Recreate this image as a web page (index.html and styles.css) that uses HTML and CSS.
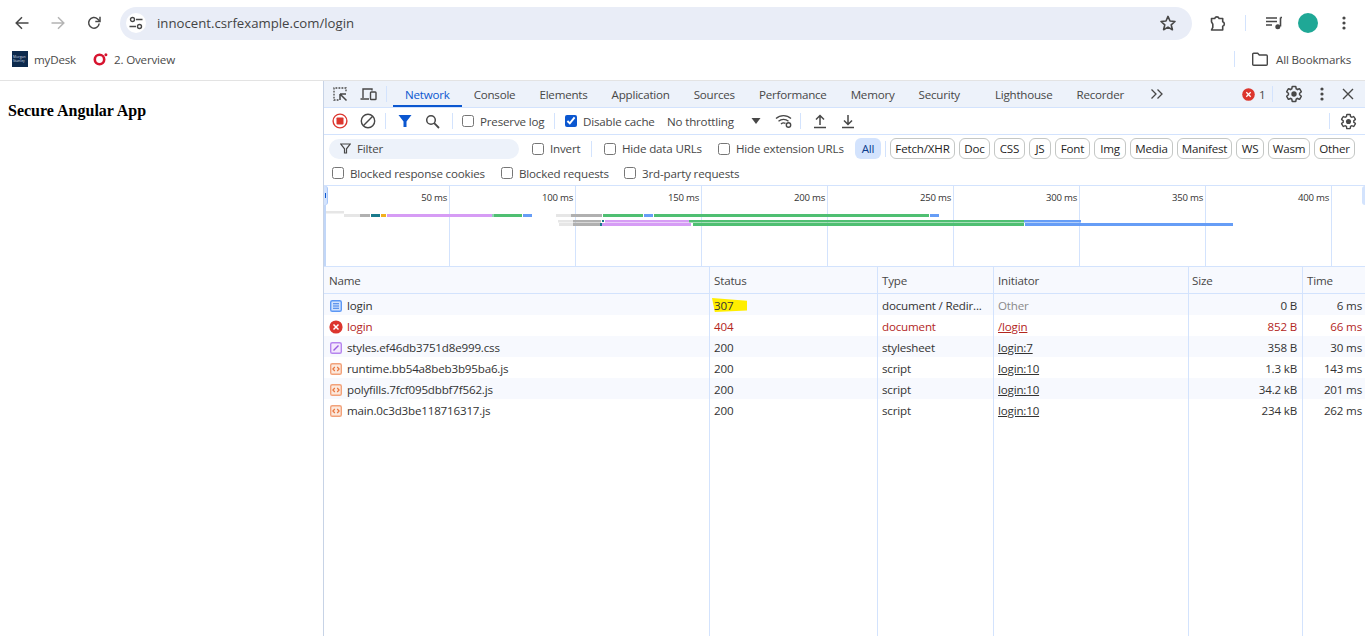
FILE: index.html
```html
<!DOCTYPE html>
<html lang="en">
<head>
<meta charset="utf-8">
<title>Secure Angular App</title>
<link rel="stylesheet" href="styles.css">
</head>
<body>
<svg class="defs" width="0" height="0" aria-hidden="true">
  <symbol id="gear" viewBox="0 0 24 24">
    <path fill="none" stroke="currentColor" stroke-width="2" d="M19.43 12.98c.04-.32.07-.64.07-.98s-.03-.66-.07-.98l2.11-1.65c.19-.15.24-.42.12-.64l-2-3.46c-.12-.22-.39-.3-.61-.22l-2.49 1c-.52-.4-1.08-.73-1.69-.98l-.38-2.65C14.46 2.18 14.25 2 14 2h-4c-.25 0-.46.18-.49.42l-.38 2.65c-.61.25-1.17.59-1.69.98l-2.49-1c-.23-.09-.49 0-.61.22l-2 3.46c-.13.22-.07.49.12.64l2.11 1.65c-.04.32-.07.65-.07.98s.03.66.07.98l-2.11 1.65c-.19.15-.24.42-.12.64l2 3.46c.12.22.39.3.61.22l2.49-1c.52.4 1.08.73 1.69.98l.38 2.65c.03.24.24.42.49.42h4c.25 0 .46-.18.49-.42l.38-2.65c.61-.25 1.17-.59 1.69-.98l2.49 1c.23.09.49 0 .61-.22l2-3.46c.12-.22.07-.49-.12-.64l-2.11-1.65z"/>
    <circle cx="12" cy="12" r="3.6" fill="currentColor"/>
  </symbol>
  <symbol id="dots" viewBox="0 0 16 16">
    <circle cx="8" cy="3" r="1.6" fill="currentColor"/><circle cx="8" cy="8" r="1.6" fill="currentColor"/><circle cx="8" cy="13" r="1.6" fill="currentColor"/>
  </symbol>
  <symbol id="jsfile" viewBox="0 0 14 14">
    <rect x="1.7" y="1.7" width="10.6" height="10.6" rx="1.6" fill="#fce8dc" stroke="#f2a27a" stroke-width="1.4"/>
    <path d="M5.8 5 3.9 7l1.9 2M8.2 5l1.9 2-1.9 2" fill="none" stroke="#e8763f" stroke-width="1.2"/>
  </symbol>
</svg>

<header class="toolbar">
  <svg class="nav-icon" viewBox="0 0 16 16"><path d="M14.5 8H2.5M8 2.2 2.2 8 8 13.8" fill="none" stroke="#474747" stroke-width="1.5"/></svg>
  <svg class="nav-icon" viewBox="0 0 16 16"><path d="M1.5 8h12M8 2.2 13.8 8 8 13.8" fill="none" stroke="#b4b4b4" stroke-width="1.5"/></svg>
  <svg class="nav-icon" viewBox="0 0 16 16"><path d="M13.2 8.5A5.3 5.3 0 1 1 11.6 4L13.6 6" fill="none" stroke="#474747" stroke-width="1.5"/><path d="M14 1.8V6.5H9.3" fill="none" stroke="#474747" stroke-width="1.5"/></svg>
  <div class="omnibox">
    <span class="tune">
      <svg width="14" height="14" viewBox="0 0 14 14"><circle cx="3.5" cy="3.5" r="2" fill="none" stroke="#474747" stroke-width="1.4"/><path d="M7 3.5h6.5M.5 10.5H7" stroke="#474747" stroke-width="1.4"/><circle cx="10.5" cy="10.5" r="2" fill="none" stroke="#474747" stroke-width="1.4"/></svg>
    </span>
    <span class="url">innocent.csrfexample.com/login</span>
    <svg class="star" width="18" height="18" viewBox="0 0 18 18"><path d="M9 2.4 11 7l5 .5-3.8 3.3 1.2 4.9L9 13.1l-4.4 2.6 1.2-4.9L2 7.5 7 7z" fill="none" stroke="#474747" stroke-width="1.6" stroke-linejoin="round"/></svg>
  </div>
  <svg class="ext" width="18" height="18" viewBox="0 0 18 18"><path d="M2.500 4.500h3.200a2.300 2.300 0 0 1 4.400 0h3.600v3.300a2.300 2.300 0 0 1 0 4.400v3.800H2.500l1.300-2.600v-3.200l-1.300-2.400z" fill="none" stroke="#474747" stroke-width="1.600" stroke-linejoin="round"/></svg>
  <span class="tool-sep"></span>
  <svg class="media" width="18" height="16" viewBox="0 0 18 16"><path d="M1 3h11M1 6.500h11M1 10h6" stroke="#474747" stroke-width="1.500"/><path d="M15.500 2.500v9" stroke="#474747" stroke-width="1.600"/><path d="M15.500 2.500H17" stroke="#474747" stroke-width="1.600"/><circle cx="12.800" cy="11.800" r="2.500" fill="#474747"/></svg>
  <span class="avatar"></span>
  <svg class="chrome-dots" width="16" height="16"><use href="#dots"/></svg>
</header>

<nav class="bookmarks">
  <span class="ms-logo">Morgan<br>Stanley</span>
  <span class="bm-label">myDesk</span>
  <svg class="o-logo" width="15" height="14" viewBox="0 0 15 14"><circle cx="6.500" cy="7.500" r="4.700" fill="none" stroke="#d7142f" stroke-width="2.600"/><circle cx="12.900" cy="2.700" r="1.500" fill="#d7142f"/></svg>
  <span class="bm-label">2. Overview</span>
  <span class="bm-spacer"></span>
  <span class="bm-sep"></span>
  <svg class="folder" width="18" height="16" viewBox="0 0 18 16"><path d="M1.700 3.200c0-.6.400-1 1-1h4l1.600 1.800h7c.6 0 1 .4 1 1v8.300c0 .6-.4 1-1 1H2.700c-.6 0-1-.4-1-1z" fill="none" stroke="#474747" stroke-width="1.400"/></svg>
  <span class="bm-label">All Bookmarks</span>
</nav>

<main class="split">
  <section class="page"><strong class="app-title">Secure Angular App</strong></section>

  <section class="devtools">
    <div class="tabbar">
      <svg class="dt-i first" width="16" height="16" viewBox="0 0 16 16"><path d="M6.500 14H2V2h12v4.500" fill="none" stroke="#474747" stroke-width="1.300" stroke-dasharray="1.800 1.200"/><path d="M8 8h6M8 8v6M8 8l6.500 6.500" fill="none" stroke="#474747" stroke-width="1.500"/></svg>
      <svg class="dt-i dev" width="17" height="16" viewBox="0 0 17 16"><path d="M3 12V3h9v1.500M.5 13h8.500" fill="none" stroke="#474747" stroke-width="1.400"/><rect x="10.500" y="6" width="5.500" height="7.500" rx=".8" fill="none" stroke="#474747" stroke-width="1.400"/></svg>
      <span class="vsep tab-sep"></span>
      <span class="tab active">Network</span>
      <span class="tab">Console</span>
      <span class="tab">Elements</span>
      <span class="tab">Application</span>
      <span class="tab">Sources</span>
      <span class="tab">Performance</span>
      <span class="tab">Memory</span>
      <span class="tab sec">Security</span>
      <span class="tab">Lighthouse</span>
      <span class="tab">Recorder</span>
      <svg class="more" width="14" height="12" viewBox="0 0 14 12"><path d="M1.500 1.500 6 6l-4.500 4.500M7.500 1.500 12 6l-4.500 4.500" fill="none" stroke="#474747" stroke-width="1.300"/></svg>
      <span class="tab-spacer"></span>
      <svg class="err" width="13" height="13" viewBox="0 0 13 13"><circle cx="6.500" cy="6.500" r="6.300" fill="#dc362e"/><path d="M4.300 4.300l4.400 4.400M8.700 4.300 4.300 8.700" stroke="#fff" stroke-width="1.300"/></svg>
      <span class="err-count">1</span>
      <span class="vsep err-sep"></span>
      <svg class="gear-top" width="18" height="18"><use href="#gear"/></svg>
      <svg class="dots-top" width="16" height="16"><use href="#dots"/></svg>
      <svg class="close" width="12" height="12" viewBox="0 0 12 12"><path d="M1 1l10 10M11 1 1 11" stroke="#474747" stroke-width="1.400"/></svg>
    </div>

    <div class="netbar">
      <svg class="rec" width="16" height="16" viewBox="0 0 16 16"><circle cx="8" cy="8" r="6.900" fill="none" stroke="#dc362e" stroke-width="1.400"/><rect x="4.500" y="4.500" width="7" height="7" rx=".8" fill="#dc362e"/></svg>
      <svg class="clr" width="16" height="16" viewBox="0 0 16 16"><circle cx="8" cy="8" r="6.700" fill="none" stroke="#474747" stroke-width="1.400"/><path d="M3.300 12.700 12.700 3.300" stroke="#474747" stroke-width="1.400"/></svg>
      <span class="vsep s1"></span>
      <svg class="funnel" width="14" height="12" viewBox="0 0 14 12"><path d="M.5 0h13L8.500 6.500V12h-3V6.500z" fill="#0b57d0"/></svg>
      <svg class="search" width="15" height="15" viewBox="0 0 15 15"><circle cx="6" cy="6" r="4.300" fill="none" stroke="#474747" stroke-width="1.500"/><path d="M9.200 9.200 14 14" stroke="#474747" stroke-width="1.800"/></svg>
      <span class="vsep s2"></span>
      <label class="check c-preserve"><input type="checkbox">Preserve log</label>
      <span class="vsep s3"></span>
      <label class="check c-cache"><input type="checkbox" checked>Disable cache</label>
      <span class="throttle">No throttling</span>
      <svg class="caret" width="10" height="6" viewBox="0 0 10 6"><path d="M.5 0h9L5 6z" fill="#474747"/></svg>
      <svg class="wifi" width="18" height="14" viewBox="0 0 18 14"><path d="M1 4.500a11 11 0 0 1 15 0M3.500 7.300a7.500 7.500 0 0 1 10 0M6 10a4 4 0 0 1 4.500-.6" fill="none" stroke="#474747" stroke-width="1.300"/><circle cx="13.500" cy="11" r="2.200" fill="none" stroke="#474747" stroke-width="1.400"/></svg>
      <span class="vsep s4"></span>
      <svg class="updown up" width="14" height="15" viewBox="0 0 14 15"><path d="M7 11V2M3 5.500 7 1.500l4 4M1 13.500h12" fill="none" stroke="#474747" stroke-width="1.500"/></svg>
      <svg class="updown down" width="14" height="15" viewBox="0 0 14 15"><path d="M7 1v9M3 6.500l4 4 4-4M1 13.500h12" fill="none" stroke="#474747" stroke-width="1.500"/></svg>
      <span class="tab-spacer"></span>
      <span class="vsep s5"></span>
      <svg class="gear-net" width="17" height="17"><use href="#gear"/></svg>
    </div>

    <div class="filterbar">
      <div class="filter-input">
        <svg width="11" height="11" viewBox="0 0 11 11"><path d="M.8 1h9.400L6.500 5.800V10h-2V5.800z" fill="none" stroke="#474747" stroke-width="1.200"/></svg>
        <span>Filter</span>
      </div>
      <label class="check c-invert"><input type="checkbox">Invert</label>
      <span class="vsep s6"></span>
      <label class="check c-data"><input type="checkbox">Hide data URLs</label>
      <label class="check c-ext"><input type="checkbox">Hide extension URLs</label>
      <span class="chip-all">All</span>
      <span class="vsep s7"></span>
      <div class="chips">
        <span class="chip w-fetch">Fetch/XHR</span>
        <span class="chip w-doc">Doc</span>
        <span class="chip w-css">CSS</span>
        <span class="chip w-js">JS</span>
        <span class="chip w-font">Font</span>
        <span class="chip w-img">Img</span>
        <span class="chip w-media">Media</span>
        <span class="chip w-manifest">Manifest</span>
        <span class="chip w-ws">WS</span>
        <span class="chip w-wasm">Wasm</span>
        <span class="chip w-other">Other</span>
      </div>
    </div>

    <div class="blockbar">
      <label class="check c-cookies"><input type="checkbox">Blocked response cookies</label>
      <label class="check c-req"><input type="checkbox">Blocked requests</label>
      <label class="check"><input type="checkbox">3rd-party requests</label>
    </div>

    <div class="overview">
      <div class="tick">50 ms</div><div class="tick">100 ms</div><div class="tick">150 ms</div><div class="tick">200 ms</div><div class="tick">250 ms</div><div class="tick">300 ms</div><div class="tick">350 ms</div><div class="tick">400 ms</div>
      <svg class="bars" width="1041" height="81" viewBox="324 186 1041 81">
        <rect x="326" y="211" width="18" height="2.500" fill="#e6e6e6"/>
        <rect x="344" y="214" width="16" height="3" fill="#e6e6e6"/><rect x="360" y="214" width="10" height="3" fill="#b0b0b0"/><rect x="371" y="214" width="9" height="3" fill="#1a7a8c"/><rect x="381" y="214" width="5" height="3" fill="#f2b01e"/><rect x="387" y="214" width="105" height="3" fill="#d69cf5"/><rect x="492" y="214" width="2" height="3" fill="#8fd3b5"/><rect x="494" y="214" width="28" height="3" fill="#4fbf72"/><rect x="523" y="214" width="9" height="3" fill="#669df6"/>
        <rect x="556" y="214" width="15" height="3" fill="#e6e6e6"/><rect x="571" y="214" width="31" height="3" fill="#b0b0b0"/><rect x="603" y="214" width="40" height="3" fill="#4fbf72"/><rect x="644" y="214" width="9" height="3" fill="#669df6"/><rect x="654" y="214" width="275" height="3" fill="#4fbf72"/><rect x="930" y="214" width="9" height="3" fill="#669df6"/>
        <rect x="558" y="220" width="15" height="2.500" fill="#e6e6e6"/><rect x="573" y="220" width="28" height="2.500" fill="#b0b0b0"/><rect x="602" y="220" width="2" height="2" fill="#1a7a8c"/><rect x="605" y="220" width="84" height="2.500" fill="#d69cf5"/><rect x="689" y="220" width="335" height="2.500" fill="#4fbf72"/><rect x="1024" y="220" width="57" height="2.500" fill="#669df6"/>
        <rect x="559" y="223" width="14" height="3" fill="#e6e6e6"/><rect x="573" y="223" width="27" height="3" fill="#b0b0b0"/><rect x="600" y="223" width="2" height="3" fill="#1a7a8c"/><rect x="602" y="223" width="89" height="3" fill="#d69cf5"/><rect x="693" y="223" width="331" height="3" fill="#4fbf72"/><rect x="1025" y="223" width="208" height="3" fill="#669df6"/>
      </svg>
      <span class="handle left"></span>
      <span class="handle right"></span>
    </div>

    <div class="grid">
      <div class="row head"><div>Name</div><div>Status</div><div>Type</div><div>Initiator</div><div class="h-size">Size</div><div>Time</div></div>
      <div class="row alt">
        <div class="name"><svg width="14" height="14" viewBox="0 0 14 14"><rect x="1.700" y="1.700" width="10.600" height="10.600" rx="1.600" fill="#d3e3fd" stroke="#5c98f5" stroke-width="1.400"/><path d="M4 4.700h6M4 7h6M4 9.300h6" stroke="#3a7be8" stroke-width="1.100"/></svg>login</div>
        <div class="status-hl">307</div><div>document / Redir...</div><div class="muted">Other</div><div class="num">0 B</div><div class="num t">6 ms</div>
      </div>
      <div class="row error">
        <div class="name"><svg width="14" height="14" viewBox="0 0 14 14"><circle cx="7" cy="7" r="6.600" fill="#dc362e"/><path d="M4.500 4.500l5 5M9.500 4.500l-5 5" stroke="#fff" stroke-width="1.500"/></svg>login</div>
        <div>404</div><div>document</div><div class="link">/login</div><div class="num">852 B</div><div class="num t">66 ms</div>
      </div>
      <div class="row alt">
        <div class="name"><svg width="14" height="14" viewBox="0 0 14 14"><rect x="1.700" y="1.700" width="10.600" height="10.600" rx="1.600" fill="#f3e8fd" stroke="#b685ee" stroke-width="1.400"/><path d="M4.500 9.500 9.500 4.500" stroke="#9a5be0" stroke-width="1.400"/></svg>styles.ef46db3751d8e999.css</div>
        <div>200</div><div>stylesheet</div><div class="link">login:7</div><div class="num">358 B</div><div class="num t">30 ms</div>
      </div>
      <div class="row">
        <div class="name"><svg width="14" height="14"><use href="#jsfile"/></svg>runtime.bb54a8beb3b95ba6.js</div>
        <div>200</div><div>script</div><div class="link">login:10</div><div class="num">1.3 kB</div><div class="num t">143 ms</div>
      </div>
      <div class="row alt">
        <div class="name"><svg width="14" height="14"><use href="#jsfile"/></svg>polyfills.7fcf095dbbf7f562.js</div>
        <div>200</div><div>script</div><div class="link">login:10</div><div class="num">34.2 kB</div><div class="num t">201 ms</div>
      </div>
      <div class="row">
        <div class="name"><svg width="14" height="14"><use href="#jsfile"/></svg>main.0c3d3be118716317.js</div>
        <div>200</div><div>script</div><div class="link">login:10</div><div class="num">234 kB</div><div class="num t">262 ms</div>
      </div>
      <div class="row filler"><div></div><div></div><div></div><div></div><div></div><div></div></div>
    </div>
  </section>
</main>
</body>
</html>
```

FILE: styles.css
```css
* { box-sizing: border-box; }
html, body { margin: 0; height: 636px; overflow: hidden; background: #fff; }
body {
  display: flex;
  flex-direction: column;
  font-family: "Open Sans", "Noto Sans", sans-serif;
  font-size: 11.6px;
  letter-spacing: -0.18px;
  color: #474747;
}
.defs { position: absolute; }

/* browser chrome */
.toolbar { height: 47px; display: flex; align-items: center; flex: none; padding-bottom: 1px; }
.nav-icon { width: 16px; height: 16px; margin-left: 14px; margin-right: 6px; flex: none; }
.toolbar .nav-icon:nth-child(2) { margin-left: 14px; }
.toolbar .nav-icon:nth-child(3) { margin-left: 14px; margin-right: 0; }
.omnibox {
  width: 1072px; height: 33px; margin-left: 18px;
  display: flex; align-items: center;
  background: #e9edf7; border-radius: 17px;
}
.tune {
  width: 20px; height: 20px; margin-left: 6px; border-radius: 50%;
  background: #fff; display: flex; align-items: center; justify-content: center;
}
.url { margin-left: 11px; font-size: 13.2px; letter-spacing: 0; color: #444; flex: 1; }
.star { margin-right: 15px; }
.ext { margin-left: 17px; flex: none; }
.tool-sep { width: 1px; height: 16px; background: #d3e3fd; margin-left: 18px; flex: none; }
.media { margin-left: 19px; flex: none; }
.avatar { width: 20px; height: 20px; border-radius: 50%; background: #1fa896; margin-left: 15px; flex: none; }
.chrome-dots { margin-left: 18px; color: #474747; flex: none; }

.bookmarks {
  height: 34px; flex: none; display: flex; align-items: center;
  border-bottom: 1px solid #e3e3e3; padding: 0 14px 9px 12px;
}
.ms-logo {
  width: 16px; height: 16px; background: #0d2a4d; color: #cfd8e3;
  font-size: 3.5px; letter-spacing: 0; line-height: 4px; padding: 4px 0 0 1px; overflow: hidden;
}
.bm-label { margin-left: 6px; color: #4a4a4a; }
.o-logo { margin-left: 17px; }
.bm-spacer { flex: 1; }
.bm-sep { width: 1px; height: 16px; background: #d3e3fd; }
.folder { margin-left: 16px; margin-right: 1px; }

/* split */
.split { flex: 1; display: flex; min-height: 0; }
.page { width: 323px; flex: none; padding: 21px 0 0 8px; }
.app-title { font: bold 16px/18px "Liberation Serif", serif; letter-spacing: 0; color: #000; }
.devtools { flex: 1; min-width: 0; display: flex; flex-direction: column; border-left: 1px solid #c7d3e6; }

.vsep { width: 1px; height: 16px; background: #d3e3fd; flex: none; }
.tab-spacer { flex: 1; }

.tabbar {
  height: 27px; flex: none; display: flex; align-items: center;
  background: #edf2fa; border-bottom: 1px solid #d3e3fd;
}
.dt-i.first { margin-left: 8px; }
.dt-i.dev { margin-left: 12px; }
.tab-sep { margin-left: 9px; margin-right: 6px; }
.tab { height: 26px; line-height: 28px; padding: 0 12px; color: #474747; white-space: nowrap; letter-spacing: -0.22px; }
.tab.active { color: #0b57d0; box-shadow: inset 0 -2px #0b57d0; }
.tab.sec { margin-right: 11px; }
.more { margin-left: 14px; }
.err { margin-right: 4px; }
.err-count { width: 5px; }
.err-sep { margin-left: 8px; }
.gear-top { margin-left: 12px; color: #474747; }
.dots-top { margin-left: 11px; color: #474747; }
.close { margin-left: 12px; margin-right: 11px; }

.netbar {
  height: 27px; flex: none; display: flex; align-items: center;
  border-bottom: 1px solid #d3e3fd;
}
.rec { margin-left: 8px; }
.clr { margin-left: 12px; }
.s1 { margin-left: 9px; }
.funnel { margin-left: 12px; }
.search { margin-left: 13px; }
.s2 { margin-left: 12px; }
.check { display: flex; align-items: center; white-space: nowrap; color: #474747; }
.check input { width: 12px; height: 12px; margin: 0 6px 0 0; accent-color: #0b57d0; flex: none; }
.c-preserve { margin-left: 9px; width: 84px; }
.s3 { margin-left: 8px; }
.c-cache { margin-left: 10px; width: 90px; }
.throttle { margin-left: 12px; width: 81px; white-space: nowrap; }
.caret { margin-left: 3px; }
.wifi { margin-left: 14px; }
.s4 { margin-left: 7px; }
.up { margin-left: 12px; }
.down { margin-left: 14px; }
.s5 { margin-right: 10px; }
.gear-net { margin-right: 8px; color: #474747; }

.filterbar {
  height: 27px; flex: none; display: flex; align-items: center;
}
.filter-input {
  margin-left: 5px; width: 190px; height: 20px; border-radius: 10px;
  background: #edf2fa; display: flex; align-items: center; padding-left: 11px; gap: 6px;
}
.c-invert { margin-left: 13px; width: 59px; }
.s6 { margin-right: 0; }
.c-data { margin-left: 12px; width: 114px; }
.c-ext { width: 137px; }
.chip-all {
  width: 26px; height: 21px; line-height: 21px; text-align: center;
  background: #d3e3fd; border-radius: 6px; color: #0b3c8c;
}
.s7 { margin-left: 4px; }
.chips { margin-left: 4px; display: flex; gap: 4px; }
.chip {
  height: 21px; line-height: 19px; text-align: center;
  border: 1px solid #c4c7c5; border-radius: 6px; color: #1f1f1f; white-space: nowrap;
}
.w-fetch { width: 65px; }
.w-doc { width: 31px; }
.w-css { width: 31px; }
.w-js { width: 22px; }
.w-font { width: 35px; }
.w-img { width: 32px; }
.w-media { width: 43px; }
.w-manifest { width: 55px; }
.w-ws { width: 28px; }
.w-wasm { width: 42px; }
.w-other { width: 41px; }

.blockbar {
  height: 24px; flex: none; display: flex; align-items: center; padding: 0 0 1px 8px;
  border-bottom: 1px solid #d3e3fd;
}
.c-cookies { width: 169px; }
.c-req { width: 123px; }

/* overview */
.overview {
  height: 81px; flex: none; position: relative; display: flex;
  border-bottom: 1px solid #d3e3fd; overflow: hidden;
}
.tick {
  width: 126px; flex: none; text-align: right; padding: 4px 2px 0 0;
  border-right: 1px solid #d3e3fd; color: #333; font-size: 9.6px; letter-spacing: -0.25px; line-height: 15px;
}
.bars { position: absolute; left: 0; top: 0; }
.handle { position: absolute; background: #d3e3fd; }
.handle.left { left: 0; top: 0; width: 4px; height: 19px; border-radius: 0 3px 3px 0; border-right: 1px solid #a8c7fa; }
.handle.left::after { content: ""; position: absolute; left: 1px; top: 7px; width: 1px; height: 5px; background: #0b57d0; }
.overview::before { content: ""; position: absolute; left: 0; top: 0; bottom: 0; width: 2px; background: #c2d7f8; }
.handle.right { right: 0; top: 0; width: 3px; height: 19px; border-radius: 3px 0 0 3px; }

/* table */
.grid { flex: 1; min-height: 0; display: flex; flex-direction: column; }
.row {
  display: grid; grid-template-columns: 386px 168px 116px 195px 114px 1fr;
  height: 21px; line-height: 19px; flex: none; color: #333;
}
.row > div { border-right: 1px solid #d3e3fd; padding: 2px 4px 0; white-space: nowrap; overflow: hidden; }
.row > div:last-child { border-right: 0; }
.row.head { height: 27px; line-height: 27px; background: #f7f9fe; border-bottom: 1px solid #d3e3fd; color: #474747; }
.row.head > div { padding-top: 0; }
.row.head > div:first-child { padding-left: 5px; }
.row.head > .h-size { padding-left: 3px; }
.row.alt { background: #f7f9fe; }
.row.error { color: #b3261e; }
.row.filler { flex: 1; }
.name { display: flex; align-items: center; gap: 4px; padding-left: 5px !important; }
.name svg { flex: none; }
.muted { color: #8a8a8a; }
.link { text-decoration: underline; }
.num { text-align: right; padding-right: 5px !important; }
.num.t { padding-right: 3px !important; }
.status-hl { position: relative; isolation: isolate; }
.status-hl::before {
  content: ""; position: absolute; left: 2px; top: 4px; width: 35px; height: 14px; z-index: -1;
  background: #ffee00; clip-path: polygon(0 0, 100% 20%, 100% 90%, 8% 100%);
}
```
